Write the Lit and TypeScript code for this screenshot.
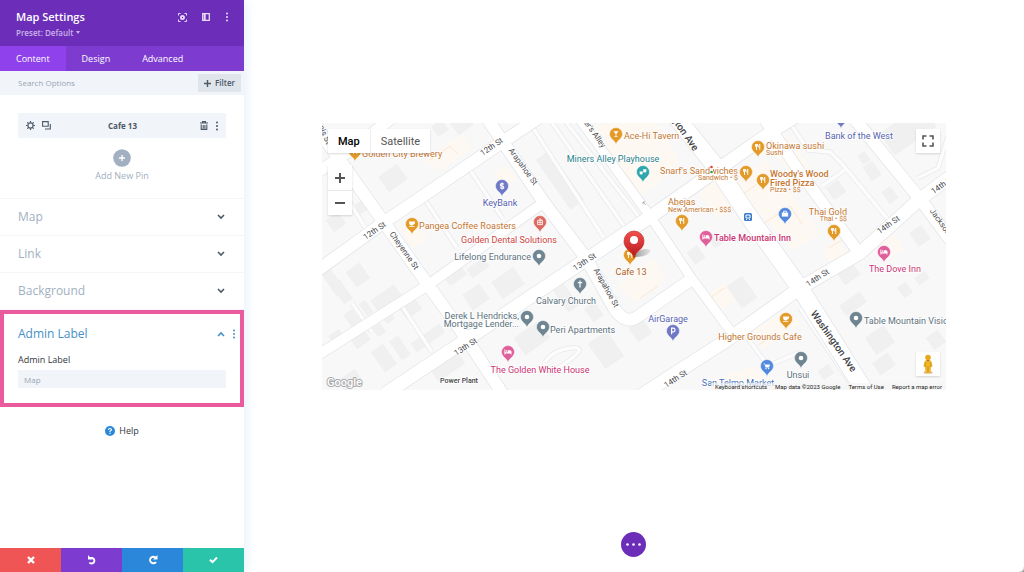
import { LitElement, html, svg, css } from "lit";
import { customElement, property, state } from "lit/decorators.js";
import { classMap } from "lit/directives/class-map.js";

type Glyph = "food" | "cup" | "bed" | "dot" | "dollar" | "bag" | "cross" | "park" | "mask" | "cart" | "drink" | "tooth";

const GLYPHS: Record<Glyph, unknown> = {
  food: svg`<path d="M-2.5-3v2q0 1 1 1V3M-.5-3v2q0 1-1 1M-1.5-3v3M1.8 3v-6q-1.2 1-1 3.2h1" fill="none" stroke="#fff" stroke-width=".9"/>`,
  cup: svg`<path d="M-3-2.5h6v2.3h-1.2q-.2 1.6-1.6 1.6h-1.2q-1.6 0-1.8-1.8zM-3 2.2h5.4v.9h-5.4z" fill="#fff"/>`,
  bed: svg`<path d="M-3.6-2.4h.9v2.6h2.4v-2h2.2q1.6 0 1.6 1.6v2.6h-.9v-1h-5.3v1h-.9z" fill="#fff"/><circle cx="-1.5" cy="-1" r=".8" fill="#fff"/>`,
  dot: svg`<circle r="2.3" fill="#fff"/>`,
  dollar: svg`<path d="M1.8-1.6Q1.3-2.4 0-2.4-1.7-2.4-1.7-1.2T0 0 1.8 1.3 0 2.4Q-1.5 2.4-1.9 1.4M0-3.5v7" fill="none" stroke="#fff" stroke-width="1.1"/>`,
  bag: svg`<path d="M-3.2-1.4h6.4v4h-6.4z" fill="#fff"/><path d="M-1.4-1.2v-1.6h2.8v1.6" fill="none" stroke="#fff" stroke-width=".9"/>`,
  cross: svg`<path d="M0-3.6v7M-2.2-1.4h4.4" stroke="#fff" stroke-width="1.2"/>`,
  park: svg`<path d="M-1.4 3.2v-6h1.6a1.7 1.7 0 0 1 0 3.6h-1.6" fill="none" stroke="#fff" stroke-width="1.2"/>`,
  mask: svg`<path d="M-3.4-.6h3.2v1.6q0 1.6-1.6 1.6t-1.6-1.6zM.2-2.8h3.2v1.8q0 1.6-1.6 1.6-1 0-1.6-.8z" fill="#fff"/>`,
  cart: svg`<path d="M-3.6-2.6h1.3l.4 1h5l-1 3h-3.6l-1-3.2h-.8z" fill="#fff"/><circle cx="-1" cy="2.5" r=".7" fill="#fff"/><circle cx="1.6" cy="2.5" r=".7" fill="#fff"/>`,
  drink: svg`<path d="M-2.6-2.8h5.2L.4 0v2h1.2v.8h-3.2v-.8h1.2V0z" fill="#fff"/>`,
  tooth: svg`<path d="M-2.4-1.6h4.8v4.2h-4.8zM-1-3h2v1.2M0-1.6v4.2M-2.4.4h4.8" fill="none" stroke="#fff" stroke-width=".8"/>`,
};

const ORANGE = "#e39a29", PINK = "#e0609c", SLATE = "#6f8591", INDIGO = "#7079c6", BLUE = "#5288de";
const T_ORANGE = "#c4752f", T_PINK = "#cb3474", T_SLATE = "#5b707c", T_INDIGO = "#5661b0", T_ROAD = "#4a4c4f";

const PINS: [number, number, string, Glyph][] = [
  [841, 118, INDIGO, "dollar"], [355, 151, ORANGE, "food"], [502, 186, INDIGO, "dollar"],
  [412, 224, ORANGE, "cup"], [540, 222, "#dd6a62", "tooth"], [539, 256, SLATE, "dot"],
  [616, 134, ORANGE, "drink"], [643, 172, "#2fa7ae", "mask"], [746, 172, ORANGE, "food"],
  [758, 147, ORANGE, "food"], [763, 180, ORANGE, "food"], [682, 221, ORANGE, "food"],
  [706, 237, PINK, "bed"], [785, 214, BLUE, "bag"], [834, 231, ORANGE, "food"],
  [884, 252, PINK, "bed"], [856, 318, SLATE, "dot"], [786, 319, ORANGE, "cup"],
  [801, 358, SLATE, "dot"], [767, 366, BLUE, "cart"], [673, 331, INDIGO, "park"],
  [580, 284, SLATE, "cross"], [543, 327, SLATE, "dot"], [527, 317, SLATE, "dot"],
  [508, 352, PINK, "bed"], [630, 255, ORANGE, "food"],
];

type Label = [number, number, string, string, string, ("start" | "middle" | "end")?, number?];
const LABELS: Label[] = [
  [362, 157, "Golden City Brewery", T_ORANGE, "poi"],
  [624, 139, "Ace-Hi Tavern", T_ORANGE, "poi"],
  [613, 162, "Miners Alley Playhouse", "#1f8189", "poi", "middle"],
  [738, 174, "Snarf's Sandwiches", T_ORANGE, "poi", "end"],
  [738, 180, "Sandwich • $", T_ORANGE, "sub", "end"],
  [766, 149, "Okinawa sushi", T_ORANGE, "poi"],
  [766, 155, "Sushi", T_ORANGE, "sub"],
  [770, 177, "Woody's Wood", T_ORANGE, "poi strong"],
  [770, 186, "Fired Pizza", T_ORANGE, "poi strong"],
  [770, 192, "Pizza • $$", T_ORANGE, "sub"],
  [859, 139, "Bank of the West", T_INDIGO, "poi", "middle"],
  [668, 205, "Abejas", T_ORANGE, "poi"],
  [668, 212, "New American • $$$", T_ORANGE, "sub"],
  [847, 215, "Thai Gold", T_ORANGE, "poi", "end"],
  [847, 221, "Thai • $$", T_ORANGE, "sub", "end"],
  [714, 241, "Table Mountain Inn", T_PINK, "poi strong"],
  [895, 272, "The Dove Inn", T_PINK, "poi", "middle"],
  [864, 324, "Table Mountain Vision", T_SLATE, "poi"],
  [760, 340, "Higher Grounds Cafe", T_ORANGE, "poi", "middle"],
  [798, 378, "Unsui", T_SLATE, "poi", "middle"],
  [738, 386, "San Telmo Market", "#4472b8", "poi", "middle"],
  [668, 322, "AirGarage", T_INDIGO, "poi", "middle"],
  [631, 275, "Cafe 13", "#b05a12", "poi", "middle"],
  [566, 304, "Calvary Church", T_SLATE, "poi", "middle"],
  [550, 333, "Peri Apartments", T_SLATE, "poi"],
  [519, 319, "Derek L Hendricks,", T_SLATE, "poi", "end"],
  [519, 327, "Mortgage Lender...", T_SLATE, "poi", "end"],
  [540, 373, "The Golden White House", T_PINK, "poi", "middle"],
  [459, 383, "Power Plant", "#3f4245", "place", "middle"],
  [500, 206, "KeyBank", T_INDIGO, "poi", "middle"],
  [419, 229, "Pangea Coffee Roasters", T_ORANGE, "poi"],
  [509, 243, "Golden Dental Solutions", "#cc4440", "poi", "middle"],
  [531, 260, "Lifelong Endurance", T_SLATE, "poi", "end"],
  [493, 149, "12th St", T_ROAD, "road", "middle", -34],
  [376, 233, "12th St", T_ROAD, "road", "middle", -34],
  [586, 264, "13th St", T_ROAD, "road", "middle", -33],
  [467, 349, "13th St", T_ROAD, "road", "middle", -33],
  [677, 381, "14th St", T_ROAD, "road", "middle", -33],
  [819, 280, "14th St", T_ROAD, "road", "middle", -33],
  [890, 227, "14th St", T_ROAD, "road", "middle", -35],
  [944, 187, "14th St", T_ROAD, "road", "middle", -35],
  [521, 168, "Arapahoe St", T_ROAD, "road", "middle", 54],
  [604, 289, "Arapahoe St", T_ROAD, "road", "middle", 61],
  [402, 252, "Cheyenne St", T_ROAD, "road", "middle", 55],
  [589, 130, "Miner's Alley", T_ROAD, "road", "middle", 55],
  [320, 130, "Illinois St", T_ROAD, "road", "middle", 66],
  [941, 227, "Jackson St", T_ROAD, "road", "middle", 54],
  [673, 122, "Washington Ave", "#3e4043", "avenue", "middle", 55],
  [831, 343, "Washington Ave", "#3e4043", "avenue", "middle", 55],
];

const STREETS: [string, number][] = [
  ["M318 172L348 152 392 118", 11],
  ["M318 270L383 223 498 145 540 117", 12],
  ["M318 355L428 285 543 203", 10],
  ["M385 394L466 340 590 257 653 215 717 170 780 126 795 117", 13],
  ["M640 396L730 338 800 288 860 253 920 199 950 177", 13],
  ["M310 118L383 221 428 285 466 338 504 396", 12],
  ["M486 117L543 201 586 258 614 308Q626 327 640 315L692 279", 12],
  ["M578 117L650 216 692 279 735 337", 9],
  ["M763 117L797 168 857 250", 11],
  ["M853 117L920 199 952 242", 12],
  ["M676 117L717 168 750 218 800 288 868 396", 17],
];

const LANES = [
  "M470 170L503 219M425 200L457 248M342 190L368 232M352 303L372 332M526 117L604 238M548 117L624 226M562 117L640 218",
  "M400 303L432 352M786 117L808 150 830 152 844 166 890 222M846 169L822 186M950 130L938 168 918 178",
  "M800 308L855 390M742 330L768 366 800 352M545 362q8-12 26-14t-4 14l-18 12",
];

const BLOCKS: [number, number, number, number][] = [
  [393, 178, 22, 18], [440, 128, 12, 12], [462, 124, 18, 14], [334, 283, 10, 26], [342, 292, 10, 22], [358, 275, 16, 18],
  [386, 298, 28, 13], [352, 318, 10, 14], [366, 308, 7, 14], [336, 336, 12, 8], [361, 340, 16, 10], [379, 330, 9, 10],
  [388, 317, 9, 10], [411, 309, 18, 12], [384, 358, 14, 24], [400, 348, 10, 22], [428, 338, 34, 10], [446, 364, 32, 20],
  [350, 380, 20, 12], [455, 275, 20, 12], [478, 268, 20, 10], [476, 297, 20, 18], [508, 283, 26, 20], [532, 338, 30, 20],
  [606, 350, 22, 30], [640, 330, 16, 18], [566, 298, 12, 26], [594, 312, 12, 16], [864, 158, 8, 10], [872, 171, 11, 16],
  [890, 195, 10, 14], [836, 190, 14, 14], [920, 236, 14, 16], [905, 290, 10, 12], [922, 278, 12, 8], [848, 273, 18, 16],
  [853, 304, 24, 12], [880, 340, 22, 20], [884, 364, 18, 14], [826, 372, 12, 10], [936, 340, 14, 14], [560, 180, 16, 60],
  [742, 292, 18, 26], [696, 255, 12, 14], [716, 240, 10, 12], [908, 130, 50, 26], [360, 208, 16, 10], [336, 222, 14, 14],
];

const WARM = [
  "M424 160l38-26 10 14-34 24zM400 228l14-9 14 19-16 11zM492 174l14-9 10 14-12 9z",
  "M588 125l68-4 24 40-22 22-22 16-40-60zM735 185l30-26 56 74-28 18zM753 134l24-12 40 54-12 10z",
  "M618 285l34-26 14 20-30 24zM700 300l26-18 16 10-22 20zM752 330l36-20 12 14-38 26z",
  "M694 188l30-14 20 28-26 18zM868 240l20-14 16 22-20 14zM822 250l16-10 10 12-18 12zM706 382l48-16 20 24h-60z",
];

@customElement("street-map")
export class StreetMap extends LitElement {
  static styles = css`
    :host { display: block; position: relative; overflow: hidden; height: 267px; background: #f8f8f9; font: 400 9px/12px Roboto, sans-serif; }
    .canvas { display: block; width: 100%; height: 100%; }
    .canvas text { paint-order: stroke; stroke: #fff; stroke-width: 1.5px; stroke-linejoin: round; }
    .poi { font-size: 9px; }
    .strong { font-weight: 500; }
    .sub { font-size: 7px; }
    .road { font-size: 8px; }
    .place { font-size: 7px; font-weight: 500; }
    .avenue { font-size: 10px; font-weight: 500; }
    .canvas .logo { font: 500 11px Roboto, sans-serif; fill: #fff; stroke: #a9abad; stroke-width: 2px; }
    button { border: 0; margin: 0; padding: 0; background: #fff; color: #565656; font-family: inherit; cursor: pointer; }
    .types, .zoom, .full, .walker { position: absolute; display: flex; background: #fff; box-shadow: 0 1px 2px rgba(0, 0, 0, 0.15); }
    .types { top: 6px; left: 6px; height: 24px; }
    .types button { padding: 0 10px; font-size: 11px; }
    .types button + button { border-left: 1px solid #eee; }
    .types .on { color: #000; font-weight: 500; }
    .zoom { top: 42px; left: 6px; width: 24px; flex-direction: column; }
    .zoom button { height: 25px; display: grid; place-items: center; }
    .zoom button + button { border-top: 1px solid #e8e8e8; }
    .full, .walker { right: 6px; width: 24px; height: 24px; align-items: center; justify-content: center; }
    .full { top: 6px; }
    .walker { bottom: 14px; }
    .legal { position: absolute; right: 0; bottom: 0; display: flex; font-size: 6px; line-height: 7px; color: #222; }
    .legal > * { font: inherit; color: inherit; text-decoration: none; background: rgba(245, 245, 245, 0.7); padding: 0 4px; white-space: nowrap; }
  `;

  @state() private type = "Map";

  private pin([x, y, color, glyph]: [number, number, string, Glyph]) {
    return svg`<g transform="translate(${x} ${y})">
      <path d="M0 10.5C-1 6-6.5 5-6.5 0a6.5 6.5 0 0 1 13 0C6.5 5 1 6 0 10.5z" fill=${color} stroke="#fff" stroke-width=".5"/>
      ${GLYPHS[glyph]}</g>`;
  }

  render() {
    return html`
      <svg class="canvas" viewBox="322 123 624 267" preserveAspectRatio="xMidYMid slice" role="img" aria-label="Street map">
        <rect x="-400" y="0" width="2400" height="600" fill="#f8f8f9" />
        ${WARM.map((d) => svg`<path d=${d} fill="#fdf8f1"/>`)}
        ${BLOCKS.map(([x, y, w, h]) => svg`<rect x=${x - w / 2} y=${y - h / 2} width=${w} height=${h} transform="rotate(-35 ${x} ${y})" fill="#f0f0f1" stroke="#ebecee" stroke-width=".5"/>`)}
        <path d="M430 160l20-14 8 8M594 132l40 54M740 196l26-18M760 226l30-20 12 18M640 298l18-12M710 298l14-10M758 345l18-10M828 248l14-8" fill="none" stroke="#fbe8d2" />
        ${LANES.map((d) => svg`<path d=${d} fill="none" stroke="#e6e8ea" stroke-width="5"/>`)}
        ${LANES.map((d) => svg`<path d=${d} fill="none" stroke="#fcfcfd" stroke-width="3.6"/>`)}
        ${STREETS.map(([d, w]) => svg`<path d=${d} fill="none" stroke="#e1e3e6" stroke-width=${w + 1.4}/>`)}
        ${STREETS.map(([d, w]) => svg`<path d=${d} fill="none" stroke="#fff" stroke-width=${w}/>`)}
        <rect x="744" y="213" width="8" height="8" rx="1.5" fill="#3b7dc8" />
        <path d="M746 215h4v3h-4zM746 219.5h1M749 219.5h1" fill="none" stroke="#fff" />
        <path d="M646 205l-3-3m0 2v-2h2" fill="none" stroke="#9da3a8" stroke-width=".8" />
        ${PINS.map((p) => this.pin(p))}
        ${LABELS.map(([x, y, t, c, k, a = "start", r = 0]) => svg`<text class=${k} x=${x} y=${y} fill=${c} text-anchor=${a} transform="rotate(${r} ${x} ${y})">${t}</text>`)}
        <rect x="710" y="165" width="3" height="9" rx="1" fill="#fff" />
        <circle cx="711.5" cy="167" r="1.3" fill="#d9483b" /><circle cx="711.5" cy="172" r="1.3" fill="#2e9a55" />
        <defs>
          <linearGradient id="red" x1="0" y1="0" x2="0" y2="1"><stop offset="0" stop-color="#f0524d" /><stop offset="1" stop-color="#b9161b" /></linearGradient>
          <linearGradient id="shade"><stop offset="0" stop-color="#555" stop-opacity=".6" /><stop offset="1" stop-color="#777" stop-opacity=".15" /></linearGradient>
        </defs>
        <path d="M634 257q4-8 12-8t2 5q-4 3-14 3z" fill="url(#shade)" />
        <path d="M634 258c-1-7-10-8-10-17a10 10 0 0 1 20 0c0 9-9 10-10 17z" fill="url(#red)" stroke="#b52522" stroke-width=".6" />
        <circle cx="634" cy="240" r="4" fill="#fff" />
        <text class="logo" x="327" y="386">Google</text>
      </svg>
      <div class="types">
        ${["Map", "Satellite"].map((t) => html`<button class=${classMap({ on: this.type === t })} @click=${() => (this.type = t)}>${t}</button>`)}
      </div>
      <div class="zoom">
        <button aria-label="Zoom in"><svg width="12" height="12"><path d="M6 1v10M1 6h10" stroke="#555" stroke-width="2" /></svg></button>
        <button aria-label="Zoom out"><svg width="12" height="12"><path d="M1 6h10" stroke="#555" stroke-width="2" /></svg></button>
      </div>
      <button class="full" aria-label="Toggle fullscreen view">
        <svg width="12" height="12"><path d="M1 4.500V1h3.500M7.500 1H11v3.500M11 7.500V11H7.500M4.500 11H1V7.500" fill="none" stroke="#555" stroke-width="1.6" /></svg>
      </button>
      <button class="walker" aria-label="Street View">
        <svg width="12" height="20" viewBox="0 0 12 20"><ellipse cx="6" cy="18.5" rx="4.5" ry="1.2" fill="#d9b565" /><path d="M2.500 7.500Q3 6 6 6t3.500 1.500l1 5-1.500.5-.5 5.500H3.500L3 13l-1.500-.5z" fill="#f0b429" /><path d="M6 12v6M3.500 8.500L3 13M8.500 8.500L9 13" stroke="#c28516" stroke-width=".7" /><circle cx="6" cy="3.5" r="2.8" fill="#e9a91f" /><path d="M4 6h4l-2 1.500z" fill="#b87812" /></svg>
      </button>
      <div class="legal">
        <button>Keyboard shortcuts</button><span>Map data ©2023 Google</span><a href="#terms">Terms of Use</a><a href="#report">Report a map error</a>
      </div>
    `;
  }
}

const dots = html`<svg width="4" height="10" viewBox="0 0 4 10" fill="currentColor"><circle cx="2" cy="1.5" r="1" /><circle cx="2" cy="5" r="1" /><circle cx="2" cy="8.5" r="1" /></svg>`;

@customElement("option-group")
export class OptionGroup extends LitElement {
  static styles = css`
    :host { display: block; }
    button { display: flex; align-items: center; justify-content: space-between; width: 100%; height: 36px; margin: 0; padding: 0 19px 0 18px; border: 0; background: none; color: #a2b0c1; font: 12px/18px "Open Sans", sans-serif; text-align: left; cursor: pointer; }
    svg { color: #4c5866; }
  `;
  @property() name = "";
  render() {
    return html`<button aria-expanded="false">${this.name}
      <svg width="8" height="6" fill="none" stroke="currentColor" stroke-width="1.6"><path d="M1 1l3 3 3-3" /></svg></button>`;
  }
}

@customElement("app-root")
export class AppRoot extends LitElement {
  static styles = css`
    :host { display: flex; min-height: 100vh; position: relative; background: #fff; font: 500 9px/12px "Open Sans", sans-serif; color: #4c5866; }
    * { box-sizing: border-box; }
    button, input { margin: 0; border: 0; padding: 0; background: none; font: inherit; color: inherit; }
    button { cursor: pointer; }
    .panel { display: flex; flex-direction: column; flex: 0 0 244px; background: #fff; box-shadow: 0 0 14px #deecf7; }
    .head { display: flex; justify-content: space-between; height: 46px; padding: 9px 15px 0 16px; background: #6c2eb9; color: #fff; }
    .title { margin: 0; font-size: 11px; line-height: 16px; font-weight: 600; }
    .preset { display: flex; align-items: center; gap: 3px; height: 15px; color: #cbb2ea; font-size: 8px; font-weight: 600; }
    .tools { display: flex; align-items: center; gap: 15px; height: 16px; color: #e9dcf8; }
    .tools button, .entry button { display: grid; place-items: center; }
    .tabs { display: flex; height: 25px; background: #7e3bd0; color: #fff; }
    .tabs button { padding: 0 16px; }
    .tabs .on { background: #8f42ec; }
    .find { display: flex; align-items: center; justify-content: space-between; height: 24px; padding: 0 3px 0 18px; background: #f1f5f9; }
    .find input { width: 120px; outline: 0; font-size: 8px; }
    input::placeholder { color: #98a5b5; opacity: 1; }
    .filter { display: flex; align-items: center; gap: 4px; height: 18px; padding: 0 6px; background: #dfe5eb; font-size: 8px; font-weight: 600; }
    .pins { padding: 18px 18px 16px; border-bottom: 1px solid #f4f5f8; }
    .entry { display: flex; align-items: center; justify-content: space-between; height: 25px; padding: 0 7px 0 8px; background: #f1f4f8; }
    .side { display: flex; align-items: center; gap: 7px; width: 40px; }
    .side.end { justify-content: flex-end; }
    .entry strong { font-size: 8px; font-weight: 700; }
    .add { display: flex; flex-direction: column; align-items: center; gap: 3px; margin: 11px auto 0; color: #a2b0c1; }
    option-group { border-bottom: 1px solid #f4f5f8; }
    .admin { border: 4px solid #ec5a9e; height: 97px; padding: 10px 14px 0; }
    .adminhead { display: flex; align-items: center; height: 20px; color: #4590c6; }
    .adminhead h2 { flex: 1; margin: 0; font: 12px/18px "Open Sans", sans-serif; }
    .adminhead button { display: grid; place-items: center; }
    .adminhead .more { margin: 0 -10px 0 7px; }
    .field { display: block; margin-top: 10px; color: #32373c; }
    .text { display: block; width: 100%; height: 18px; margin-top: 4px; padding: 0 6px; background: #f1f4f8; outline: 0; }
    .admin .text { font-size: 8px; }
    .help { display: flex; align-items: center; justify-content: center; gap: 4px; margin: 18px auto; color: #32373c; }
    .foot { display: grid; grid-template-columns: repeat(4, 1fr); height: 24px; margin-top: auto; }
    .foot button { display: grid; place-items: center; }
    .cancel { background: #ef5555; }
    .undo { background: #7e3bd0; }
    .redo { background: #2b87da; }
    .save { background: #29c4a9; }
    .stage { flex: 1; min-width: 0; position: relative; padding: 123px 10% 60px; padding-inline: 78px; }
    .fab { position: absolute; bottom: 15px; left: 50%; width: 25px; height: 25px; margin-left: -13px; border-radius: 50%; background: #6c2eb9; display: grid; place-items: center; }
    .corner { position: absolute; right: 0; bottom: 0; width: 5px; height: 5px; background: radial-gradient(circle at 0 0, transparent 4px, #777 7px); }
  `;

  @state() private tab = "Content";

  render() {
    return html`
      <aside class="panel">
        <header class="head">
          <div>
            <h1 class="title">Map Settings</h1>
            <button class="preset">Preset: Default <svg width="4" height="3" fill="currentColor"><path d="M0 0h4L2 3z" /></svg></button>
          </div>
          <div class="tools">
            <button aria-label="Expand"><svg width="9" height="9" fill="none" stroke="currentColor"><path d="M.5 2.500v-2h2M6.500.5h2v2M8.500 6.500v2h-2M2.500 8.500h-2v-2" /><circle cx="4.5" cy="4.5" r="1.6" stroke-width="1.8" /></svg></button>
            <button aria-label="Dock"><svg width="8" height="8" fill="none" stroke="currentColor" stroke-width="1.3"><path d="M.7.7h6.600v6.600H.7z" /><path d="M2.700 0v8" stroke-width="2" /></svg></button>
            <button aria-label="More options">${dots}</button>
          </div>
        </header>
        <nav class="tabs">
          ${["Content", "Design", "Advanced"].map((t) => html`<button class=${classMap({ on: this.tab === t })} @click=${() => (this.tab = t)}>${t}</button>`)}
        </nav>
        <div class="find">
          <input type="search" aria-label="Search options" placeholder="Search Options" />
          <button class="filter"><svg width="7" height="7" stroke="currentColor" stroke-width="1.4"><path d="M3.500 0v7M0 3.500h7" /></svg>Filter</button>
        </div>
        <section class="pins">
          <div class="entry">
            <div class="side">
              <button aria-label="Settings"><svg width="9" height="9" viewBox="-4.5 -4.5 9 9" fill="none" stroke="currentColor"><circle r="2.6" stroke-width="1.2" /><path d="M0-4.500v1.600M0 2.900v1.600M-4.500 0h1.600M2.900 0h1.600M-3.200-3.200l1.200 1.200M2 2l1.200 1.200M-3.200 3.200L-2 2M2-2l1.200-1.200" stroke-width="1.2" /></svg></button>
              <button aria-label="Duplicate"><svg width="9" height="9" fill="none" stroke="currentColor" stroke-width="1.1"><path d="M.6.6h5.600v4.600H.6zM8.300 3v5H3" /></svg></button>
            </div>
            <strong>Cafe 13</strong>
            <div class="side end">
              <button aria-label="Delete"><svg width="8" height="9" fill="none" stroke="currentColor" stroke-width="1.1"><path d="M0 2h8M2.500 2V.6h3V2M1.200 3.500v4.900h5.600V3.500M3.200 4v3.500M4.900 4v3.500" /></svg></button>
              <button aria-label="More">${dots}</button>
            </div>
          </div>
          <button class="add">
            <svg width="18" height="18"><circle cx="9" cy="9" r="8.8" fill="#a2b0c1" /><path d="M9 6v6M6 9h6" stroke="#fff" stroke-width="1.4" /></svg>
            Add New Pin
          </button>
        </section>
        <option-group name="Map"></option-group>
        <option-group name="Link"></option-group>
        <option-group name="Background"></option-group>
        <section class="admin">
          <div class="adminhead">
            <h2>Admin Label</h2>
            <button aria-label="Collapse"><svg width="8" height="6" fill="none" stroke="currentColor" stroke-width="1.6"><path d="M1 5l3-3 3 3" /></svg></button>
            <button class="more" aria-label="More">${dots}</button>
          </div>
          <label class="field" for="admin-label">Admin Label</label>
          <input class="text" id="admin-label" placeholder="Map" />
        </section>
        <button class="help">
          <svg width="10" height="10" fill="none"><circle cx="5" cy="5" r="5" fill="#2b87da" /><path d="M3.500 4q0-1.500 1.500-1.500T6.500 3.800Q6.500 4.600 5 5.200v.7M5 6.800v1.200" stroke="#fff" stroke-width="1.1" /></svg>
          Help
        </button>
        <footer class="foot">
          <button class="cancel" aria-label="Discard"><svg width="8" height="8" stroke="#fff" stroke-width="2.4"><path d="M1 1l6 6M7 1L1 7" /></svg></button>
          <button class="undo" aria-label="Undo"><svg width="10" height="10" fill="none" stroke="#fff" stroke-width="1.9"><path d="M2 3h3.200a2.800 2.800 0 1 1-2.800 4.500" /><path d="M1 0v4.500h4z" fill="#fff" stroke="none" /></svg></button>
          <button class="redo" aria-label="Redo"><svg width="10" height="10" fill="none" stroke="#fff" stroke-width="1.9"><path d="M7.500 2.500A3.300 3.300 0 1 0 8 7" /><path d="M9.500 0v4.500H5z" fill="#fff" stroke="none" /></svg></button>
          <button class="save" aria-label="Save"><svg width="9" height="8" fill="none" stroke="#fff" stroke-width="2"><path d="M1 3.800l2.500 2.400L8 1.500" /></svg></button>
        </footer>
      </aside>
      <main class="stage">
        <street-map></street-map>
        <button class="fab" aria-label="Page settings"><svg width="15" height="3" fill="#fff"><circle cx="1.5" cy="1.5" r="1.3" /><circle cx="7.5" cy="1.5" r="1.3" /><circle cx="13.5" cy="1.5" r="1.3" /></svg></button>
        <span class="corner"></span>
      </main>
    `;
  }
}
